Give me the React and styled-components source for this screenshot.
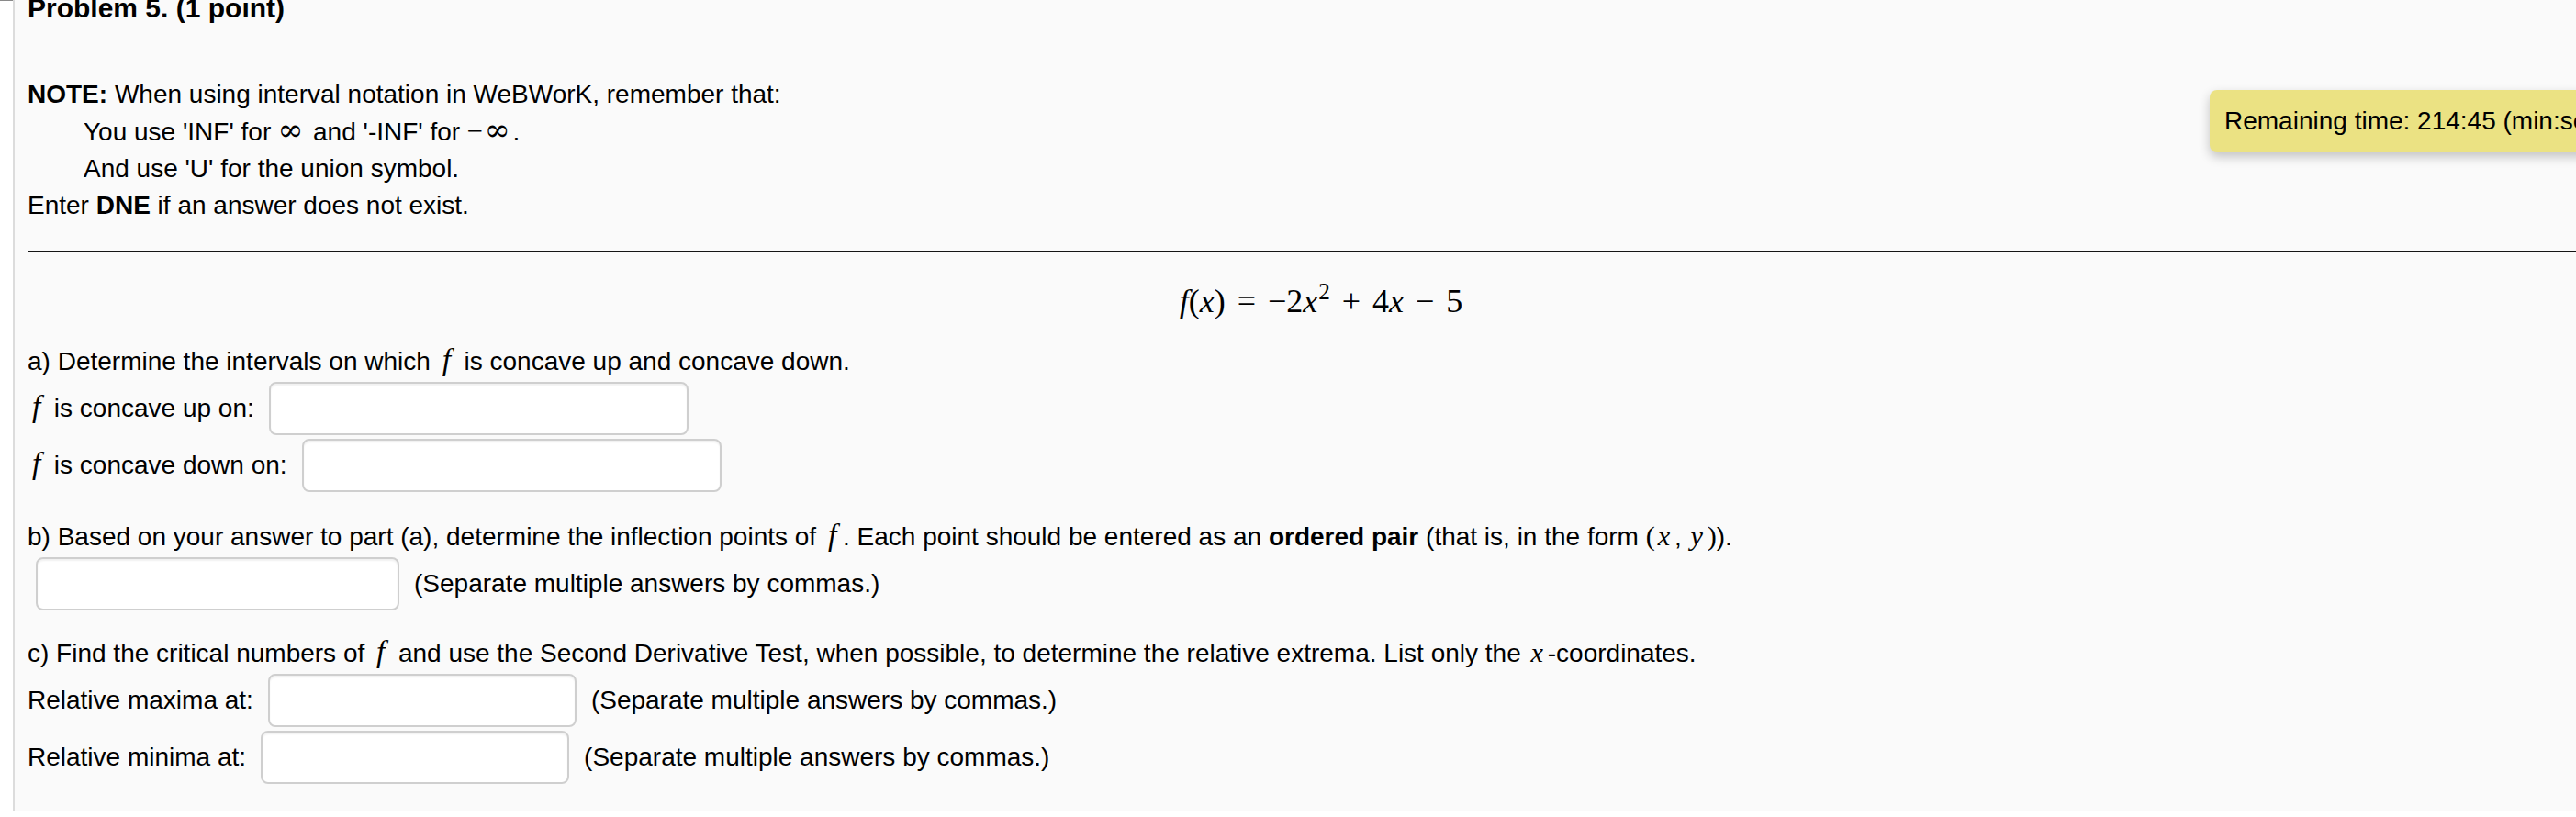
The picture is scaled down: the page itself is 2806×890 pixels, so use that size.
import React from 'react';
import styled, { createGlobalStyle } from 'styled-components';

const GlobalStyle = createGlobalStyle`
    html, body {
        margin: 0;
        padding: 0;
        background: #ffffff;
        overflow: hidden;
    }
    body {
        font-family: "Liberation Sans", Arial, Helvetica, sans-serif;
        color: #000;
    }
`;

const Page = styled.div`
    position: relative;
    border-top: 1px solid #8a8a8a;
    min-height: 889px;
`;

const ProblemBox = styled.div`
    margin-left: 14px;
    border-left: 2px solid #dcdcdc;
    background: #fafafa;
    padding-left: 14px;
    min-height: 889px;
    width: 2860px;
`;

const Content = styled.div`
    width: 2818px;
    font-size: 28px;
    line-height: 40px;
`;

const Heading = styled.div`
    font-size: 30px;
    line-height: 30px;
    font-weight: bold;
    margin-top: -7px;
`;

const Note = styled.div`
    margin-top: 59px;
`;

const Line = styled.div`
    padding-left: ${props => props.indent || 0}px;
    white-space: nowrap;
`;

const Rule = styled.hr`
    margin: 29px 0 0 0;
    border: none;
    border-top: 2px solid #151515;
    height: 0;
`;

const Display = styled.div`
    margin-top: 23px;
    height: 60px;
    line-height: 60px;
    text-align: center;
    font-family: "Liberation Serif", "Times New Roman", serif;
    font-size: 36px;
    white-space: nowrap;
`;

const MathVar = styled.span`
    font-family: "Liberation Serif", "Times New Roman", serif;
    font-style: italic;
    font-size: ${props => props.size || '1.12em'};
    line-height: 0;
    margin: 0 ${props => props.right || '0.06em'} 0 ${props => props.left || '0.04em'};
`;

const MathUp = styled.span`
    font-family: "Liberation Serif", "Times New Roman", serif;
    font-size: ${props => props.size || '1.08em'};
`;

const Infinity = styled.span`
    font-family: "DejaVu Serif", "Liberation Serif", serif;
    font-size: 1.2em;
    line-height: 0;
    margin: 0 0.08em 0 ${props => props.tight ? '0' : '0.22em'};
`;

const Minus = styled.span`
    font-family: "Liberation Serif", serif;
    font-size: 1.1em;
    margin: 0 0.06em 0 0.24em;
`;

const Op = styled.span`
    margin: 0 0.36em;
`;

const Sup = styled.sup`
    font-size: 0.7em;
    line-height: 0;
    vertical-align: 0.55em;
    margin-left: 1px;
`;

const Part = styled.div`
    margin-top: ${props => props.gap || 0}px;
    white-space: nowrap;
`;

const Row = styled.div`
    display: flex;
    align-items: center;
    gap: 16px;
    padding: 2px 0 2px ${props => props.indent || 0}px;
    white-space: nowrap;
`;

const AnswerInput = styled.input`
    width: ${props => props.w}px;
    height: 58px;
    box-sizing: border-box;
    margin: 0;
    border: 2px solid #cfcfcf;
    border-radius: 8px;
    background: #ffffff;
    box-shadow: inset 0 2px 2px rgba(0, 0, 0, 0.06);
    font-size: 28px;
    padding: 0 12px;
    outline: none;
`;

const Timer = styled.div`
    position: absolute;
    top: 97px;
    left: 2407px;
    height: 68px;
    box-sizing: border-box;
    padding: 14px 16px;
    font-size: 28px;
    line-height: 40px;
    white-space: nowrap;
    background: #ebe283;
    border-radius: 8px;
    box-shadow: 0 5px 12px rgba(0, 0, 0, 0.22);
`;

const F = () => <MathVar size="1.2em" left="0.15em" right="0.2em">f</MathVar>;
const X = () => <MathVar size="1.08em" left="0.1em" right="0.16em">x</MathVar>;

const App = () => {
    return (
        <Page>
            <GlobalStyle />
            <ProblemBox>
                <Content>
                    <Heading>Problem 5. (1 point)</Heading>

                    <Note>
                        <Line><b>NOTE:</b> When using interval notation in WeBWorK, remember that:</Line>
                        <Line indent={61}>
                            You use 'INF' for<Infinity>∞</Infinity> and '-INF' for<Minus>−</Minus><Infinity tight>∞</Infinity>.
                        </Line>
                        <Line indent={61}>And use 'U' for the union symbol.</Line>
                        <Line>Enter <b>DNE</b> if an answer does not exist.</Line>
                    </Note>

                    <Rule />

                    <Display>
                        <i>f</i>(<i>x</i>)<Op>=</Op>−2<i>x</i><Sup>2</Sup><Op>+</Op>4<i>x</i><Op>−</Op>5
                    </Display>

                    <Part gap={16}>
                        a) Determine the intervals on which <F /> is concave up and concave down.
                    </Part>
                    <Row>
                        <span><F /> is concave up on:</span>
                        <AnswerInput w={457} />
                    </Row>
                    <Row>
                        <span><F /> is concave down on:</span>
                        <AnswerInput w={457} />
                    </Row>

                    <Part gap={26}>
                        b) Based on your answer to part (a), determine the inflection points of <F />. Each point
                        should be entered as an <b>ordered pair</b> (that is, in the form <MathUp>(</MathUp><X />, <MathVar size="1.08em" left="0.06em" right="0.16em">y</MathVar><MathUp>)</MathUp>).
                    </Part>
                    <Row indent={9}>
                        <AnswerInput w={396} />
                        <span>(Separate multiple answers by commas.)</span>
                    </Row>

                    <Part gap={25}>
                        c) Find the critical numbers of <F /> and use the Second Derivative Test, when possible, to
                        determine the relative extrema. List only the <X />-coordinates.
                    </Part>
                    <Row>
                        <span>Relative maxima at:</span>
                        <AnswerInput w={336} />
                        <span>(Separate multiple answers by commas.)</span>
                    </Row>
                    <Row>
                        <span>Relative minima at:</span>
                        <AnswerInput w={336} />
                        <span>(Separate multiple answers by commas.)</span>
                    </Row>
                </Content>
            </ProblemBox>
            <Timer>Remaining time: 214:45 (min:sec)</Timer>
        </Page>
    );
};

export default App;
